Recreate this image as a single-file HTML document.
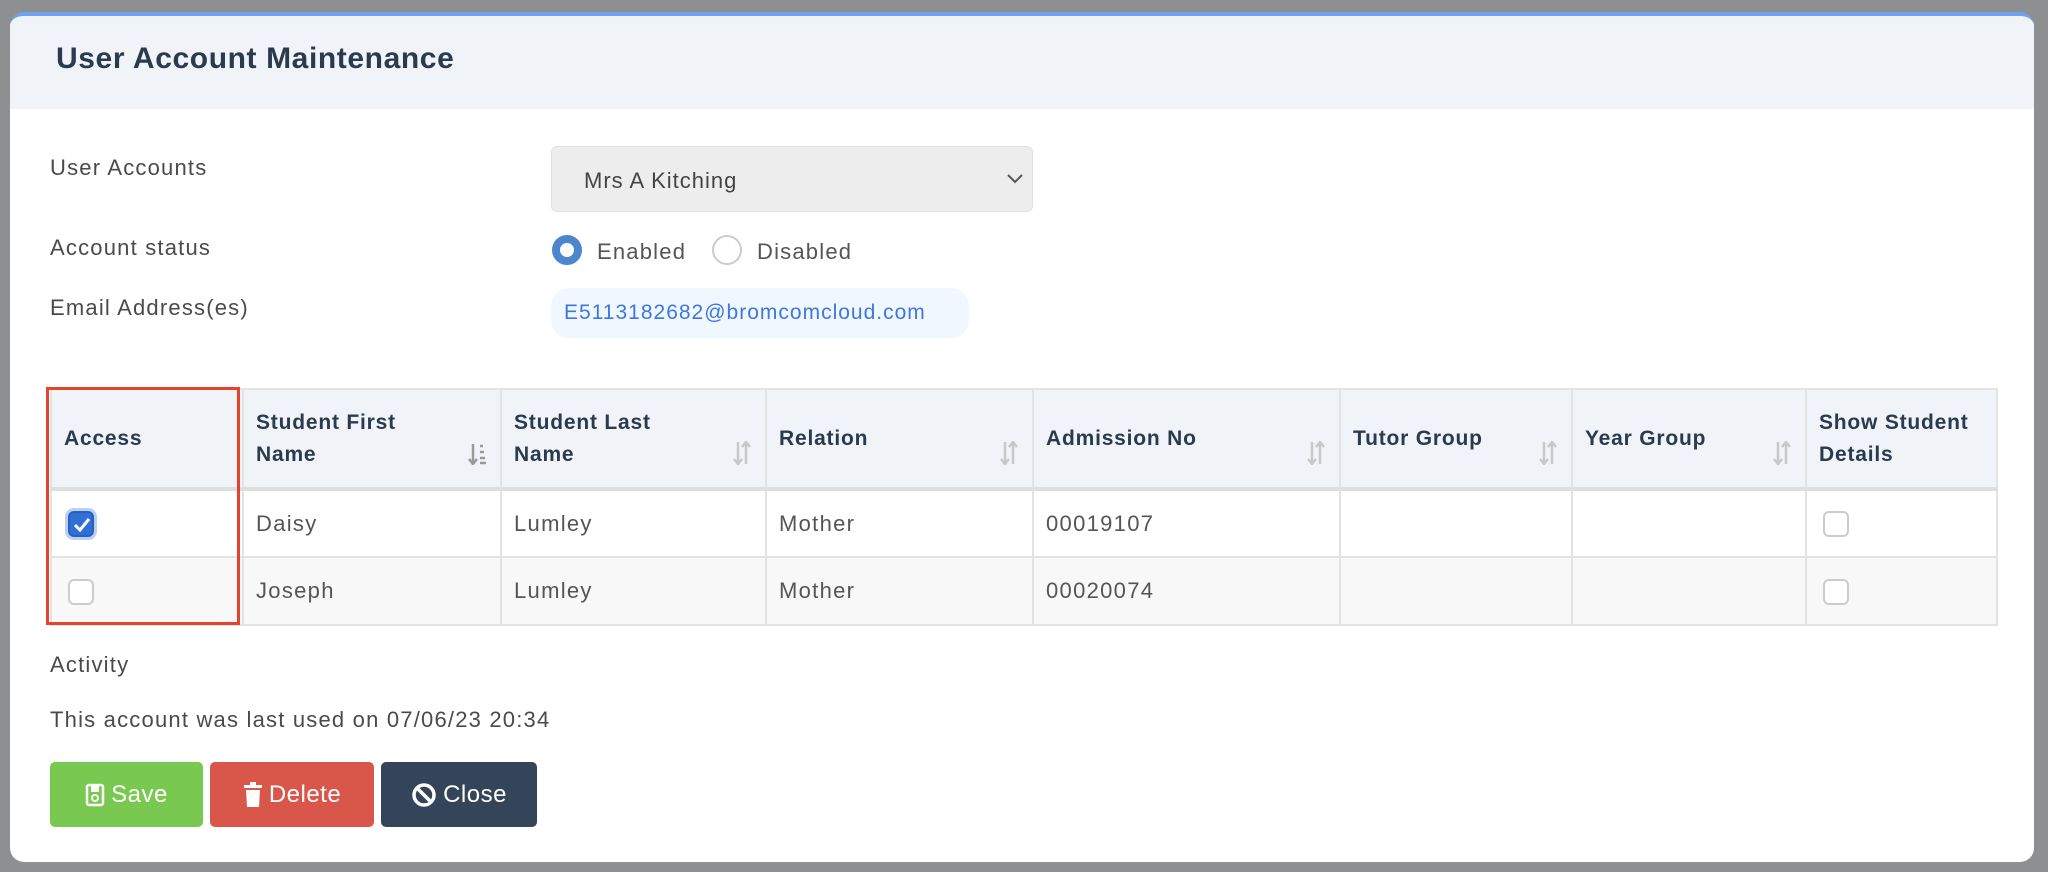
<!DOCTYPE html>
<html><head><meta charset="utf-8"><style>
*{box-sizing:border-box;margin:0;padding:0}
body{width:2048px;height:872px;background:#8e8f91;font-family:"Liberation Sans",sans-serif;position:relative;overflow:hidden}
.abs{position:absolute}
#modal{left:10px;top:12px;width:2024px;height:850px;background:#fff;border-radius:14px;border-top:4px solid #6fa1ee;overflow:hidden}
#hdr{left:0;top:0;width:100%;height:93px;background:#f0f4f9}
.title{left:46px;top:26px;font-size:30px;font-weight:bold;color:#2c3a4d;letter-spacing:0.6px}
.lbl{font-size:22px;color:#4a4a4a;letter-spacing:1.2px}
table{border-collapse:collapse;position:absolute;left:40px;top:372px;width:1948px}
th{background:#f0f4f9;color:#2c3a4d;font-size:21px;font-weight:bold;text-align:left;vertical-align:middle;padding:0 12px;height:100px;border:2px solid #e3e3e3;border-bottom:4px solid #dedede;position:relative;line-height:32px;letter-spacing:0.8px}
td{font-size:22px;color:#555;padding:0 12px;height:68px;border:2px solid #e3e3e3;letter-spacing:1.3px}
tr.r2 td{background:#f8f8f8}
.sort{position:absolute;right:14px;bottom:22px}
.cb{width:26px;height:26px;border:2px solid #ccc;border-radius:6px;background:#fff;display:inline-block;vertical-align:middle;margin-left:4px}
.btn{top:746px;height:65px;border-radius:5px;color:#fff;font-size:24px;display:flex;align-items:center;justify-content:center;gap:6px;letter-spacing:0.5px}
</style></head><body>
<div id="modal" class="abs">
 <div id="hdr" class="abs"></div>
 <div class="abs title">User Account Maintenance</div>
 <div class="abs lbl" style="left:40px;top:139px">User Accounts</div>
 <div class="abs" style="left:541px;top:130px;width:482px;height:66px;background:#ededed;border:1px solid #e2e2e2;border-radius:6px"></div>
 <div class="abs" style="left:574px;top:152px;font-size:22px;color:#444;letter-spacing:1px">Mrs A Kitching</div>
 <svg class="abs" style="left:997px;top:158px" width="16" height="10"><path d="M1 1L8 8L15 1" fill="none" stroke="#555" stroke-width="2"/></svg>
 <div class="abs lbl" style="left:40px;top:219px">Account status</div>
 <div class="abs" style="left:542px;top:219px;width:30px;height:30px;border-radius:50%;border:8px solid #4c86cc;background:#fff"></div>
 <div class="abs lbl" style="left:587px;top:223px;color:#555">Enabled</div>
 <div class="abs" style="left:702px;top:219px;width:30px;height:30px;border-radius:50%;border:2px solid #ccc;background:#fff"></div>
 <div class="abs lbl" style="left:747px;top:223px;color:#555">Disabled</div>
 <div class="abs lbl" style="left:40px;top:279px">Email Address(es)</div>
 <div class="abs" style="left:541px;top:272px;width:418px;height:50px;background:#f1f7ff;border-radius:18px"></div>
 <div class="abs" style="left:554px;top:285px;font-size:21px;color:#3c78e0;letter-spacing:1px">E5113182682@bromcomcloud.com</div>
 <table>
  <tr>
   <th style="width:192px">Access</th>
   <th style="width:258px">Student First<br>Name<svg class="sort" width="18" height="22"><path d="M5 1V20M1 16L5 21L9 16" stroke="#999" stroke-width="2.5" fill="none"/><path d="M12 3h3M12 9h4M12 15h5M12 20h6" stroke="#999" stroke-width="2.5"/></svg></th>
   <th style="width:265px">Student Last<br>Name<svg class="sort" width="18" height="24"><path d="M5 1V22M1 18L5 23L9 18M13 23V2M9 6L13 1L17 6" stroke="#c8c8c8" stroke-width="2.5" fill="none"/></svg></th>
   <th style="width:267px">Relation<svg class="sort" width="18" height="24"><path d="M5 1V22M1 18L5 23L9 18M13 23V2M9 6L13 1L17 6" stroke="#c8c8c8" stroke-width="2.5" fill="none"/></svg></th>
   <th style="width:307px">Admission No<svg class="sort" width="18" height="24"><path d="M5 1V22M1 18L5 23L9 18M13 23V2M9 6L13 1L17 6" stroke="#c8c8c8" stroke-width="2.5" fill="none"/></svg></th>
   <th style="width:232px">Tutor Group<svg class="sort" width="18" height="24"><path d="M5 1V22M1 18L5 23L9 18M13 23V2M9 6L13 1L17 6" stroke="#c8c8c8" stroke-width="2.5" fill="none"/></svg></th>
   <th style="width:234px">Year Group<svg class="sort" width="18" height="24"><path d="M5 1V22M1 18L5 23L9 18M13 23V2M9 6L13 1L17 6" stroke="#c8c8c8" stroke-width="2.5" fill="none"/></svg></th>
   <th>Show Student<br>Details</th>
  </tr>
  <tr>
   <td><span class="cb" style="background:#2f6fd6;border-color:#2a5fbf;box-shadow:0 0 0 3px #b9d0f2;position:relative"><svg class="abs" style="left:3px;top:4px" width="18" height="16"><path d="M2 8L7 13L16 2" fill="none" stroke="#fff" stroke-width="3"/></svg></span></td>
   <td>Daisy</td><td>Lumley</td><td>Mother</td><td>00019107</td><td></td><td></td><td><span class="cb"></span></td>
  </tr>
  <tr class="r2">
   <td><span class="cb"></span></td>
   <td>Joseph</td><td>Lumley</td><td>Mother</td><td>00020074</td><td></td><td></td><td><span class="cb"></span></td>
  </tr>
 </table>
 <div class="abs" style="left:36px;top:371px;width:194px;height:238px;border:3px solid #e5432b"></div>
 <div class="abs lbl" style="left:40px;top:636px">Activity</div>
 <div class="abs lbl" style="left:40px;top:691px">This account was last used on 07/06/23 20:34</div>
 <div class="abs btn" style="left:40px;width:153px;background:#79c84f"><svg width="20" height="24"><rect x="2" y="2" width="16" height="20" rx="2" fill="none" stroke="#fff" stroke-width="2.5"/><rect x="6" y="3" width="8" height="6" fill="#fff"/><circle cx="10" cy="15" r="3" fill="none" stroke="#fff" stroke-width="2"/></svg>Save</div>
 <div class="abs btn" style="left:200px;width:164px;background:#d9574a"><svg width="20" height="26"><rect x="1" y="3" width="18" height="3" fill="#fff"/><rect x="7" y="0" width="6" height="4" fill="#fff"/><path d="M3 8H17L16 25H4Z" fill="#fff"/></svg>Delete</div>
 <div class="abs btn" style="left:371px;width:156px;background:#344559"><svg width="26" height="26"><circle cx="13" cy="13" r="10" fill="none" stroke="#fff" stroke-width="3.5"/><path d="M6 6L20 20" stroke="#fff" stroke-width="3.5"/></svg>Close</div>
</div>
</body></html>
